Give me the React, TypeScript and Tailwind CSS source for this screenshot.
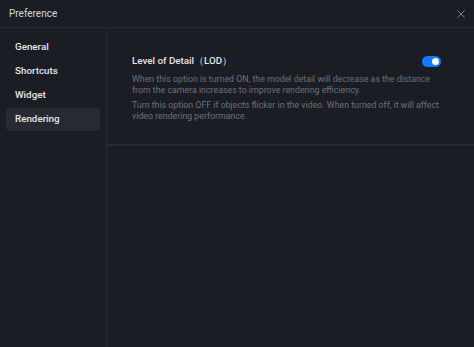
import { X } from 'lucide-react';

const navItems = ['General', 'Shortcuts', 'Widget', 'Rendering'];

export default function App() {
  const active = 'Rendering';

  return (
    <div className="w-[474px] h-[347px] bg-[#1b1d25] flex flex-col overflow-hidden font-['Roboto','Liberation_Sans',sans-serif]">
      {/* Header */}
      <div className="h-[28px] shrink-0 flex items-center justify-between pl-[9px] pr-[6px] border-b border-[#262932]">
        <span className="text-[10px] text-[#d4d6da]">Preference</span>
        <X className="w-[14px] h-[14px] text-[#8b8e95]" strokeWidth={1.5} />
      </div>

      <div className="flex flex-1 min-h-0">
        {/* Sidebar */}
        <div className="w-[107px] shrink-0 border-r border-[#262932] px-[6px] pt-[8px] flex flex-col gap-[1px]">
          {navItems.map((item) => (
            <div
              key={item}
              className={`h-[23px] flex items-center pl-[9px] rounded-[4px] text-[9.8px] font-medium text-[#e3e5e8] ${
                item === active ? 'bg-[#272a33]' : ''
              }`}
            >
              {item}
            </div>
          ))}
        </div>

        {/* Content */}
        <div className="flex-1 flex flex-col">
          <div className="pl-[25px] pr-[33px] pt-[26px] pb-[21px] border-b-2 border-[#262932]">
            <div className="flex items-center justify-between">
              <span className="text-[9.8px] font-medium text-[#e3e5e8]">Level of Detail（LOD）</span>
              <div className="w-[19px] h-[11px] rounded-full bg-[#1677ff] flex items-center justify-end pr-[2px]">
                <div className="w-[7px] h-[7px] rounded-full bg-white" />
              </div>
            </div>
            <p className="mt-[5px] text-[8.8px] leading-[11.5px] text-[#6d7078]">
              When this option is turned ON, the model detail will decrease as the distance from the camera increases to improve rendering efficiency.
            </p>
            <p className="mt-[3px] text-[8.8px] leading-[11.5px] text-[#6d7078]">
              Turn this option OFF if objects flicker in the video. When turned off, it will affect video rendering performance.
            </p>
          </div>
        </div>
      </div>
    </div>
  );
}
